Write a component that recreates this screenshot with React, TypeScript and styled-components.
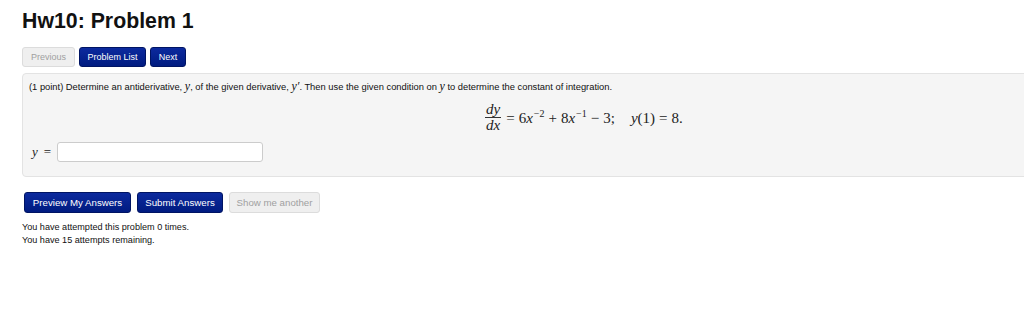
import React from "react";
import styled, { createGlobalStyle } from "styled-components";

const GlobalStyle = createGlobalStyle`
  html, body {
    margin: 0;
    padding: 0;
    background: #fff;
    overflow: hidden;
  }
  body {
    font-family: "Liberation Sans", Arial, sans-serif;
    color: #222;
  }
`;

const Page = styled.div`
  padding: 9px 0 0 22px;
`;

const Title = styled.h1`
  margin: 0;
  font-size: 21.3px;
  line-height: 24px;
  font-weight: bold;
  color: #111;
`;

const ButtonRow = styled.div<{ $top: number; $gap: number; $indent?: number }>`
  display: flex;
  gap: ${(p) => p.$gap}px;
  margin-top: ${(p) => p.$top}px;
  padding-left: ${(p) => p.$indent ?? 0}px;
`;

const Button = styled.button<{ $primary?: boolean; $w: number; $h: number; $fs: number }>`
  width: ${(p) => p.$w}px;
  height: ${(p) => p.$h}px;
  padding: 0;
  font-family: "Liberation Sans", Arial, sans-serif;
  font-size: ${(p) => p.$fs}px;
  border-radius: 3px;
  cursor: pointer;
  color: ${(p) => (p.$primary ? "#fff" : "#a0a0a0")};
  background: ${(p) =>
    p.$primary ? "linear-gradient(#0c2a9e, #001b80)" : "#efefef"};
  border: 1px solid ${(p) => (p.$primary ? "#001463" : "#dcdcdc")};
`;

const Well = styled.div`
  margin-top: 6px;
  margin-right: -10px;
  height: 104px;
  box-sizing: border-box;
  padding: 6px 0 0 6px;
  background: #f5f5f5;
  border: 1px solid #e3e3e3;
  border-radius: 4px;
`;

const ProblemText = styled.div`
  font-size: 9.35px;
  line-height: 13px;
  color: #111;
  white-space: nowrap;
`;

const MathVar = styled.span<{ $size?: number }>`
  font-family: "Liberation Serif", "Times New Roman", serif;
  font-style: italic;
  font-size: ${(p) => p.$size ?? 12}px;
`;

const Equation = styled.div`
  margin-top: 10px;
  height: 28px;
  line-height: 28px;
  padding-left: 456px;
  font-family: "Liberation Serif", "Times New Roman", serif;
  font-size: 15px;
  color: #222;
  white-space: nowrap;
`;

const Frac = styled.span`
  display: inline-flex;
  flex-direction: column;
  align-items: center;
  vertical-align: 9px;
  font-style: italic;
  line-height: 11px;
  margin-right: 1px;
`;

const Num = styled.span`
  padding: 0 1px 2px;
  border-bottom: 1px solid #333;
`;

const Den = styled.span`
  padding: 2px 1px 0;
`;

const Op = styled.span`
  margin: 0 4px;
`;

const Sup = styled.sup`
  font-size: 10px;
  line-height: 0;
  vertical-align: 6px;
  margin-left: 1px;
`;

const Quad = styled.span`
  display: inline-block;
  width: 16px;
`;

const AnswerRow = styled.div`
  display: flex;
  align-items: center;
  gap: 6px;
  margin-top: 10px;
  padding-left: 3px;
  font-family: "Liberation Serif", "Times New Roman", serif;
  font-size: 13px;
`;

const AnswerInput = styled.input`
  width: 206px;
  height: 20px;
  box-sizing: border-box;
  border: 1px solid #cccccc;
  border-radius: 3px;
  background: #fff;
  outline: none;
`;

const Messages = styled.div`
  margin-top: 8px;
  font-size: 9.1px;
  line-height: 13px;
  color: #111;
`;

export default function App() {
  return (
    <Page>
      <GlobalStyle />
      <Title>Hw10: Problem 1</Title>
      <ButtonRow $top={14} $gap={4}>
        <Button $w={53} $h={20} $fs={9}>Previous</Button>
        <Button $primary $w={67} $h={20} $fs={9}>Problem List</Button>
        <Button $primary $w={36} $h={20} $fs={9}>Next</Button>
      </ButtonRow>
      <Well>
        <ProblemText>
          (1 point) Determine an antiderivative, <MathVar>y</MathVar>, of the given
          derivative, <MathVar>y′</MathVar>. Then use the given condition on{" "}
          <MathVar>y</MathVar> to determine the constant of integration.
        </ProblemText>
        <Equation>
          <Frac>
            <Num>dy</Num>
            <Den>dx</Den>
          </Frac>
          <Op>=</Op>6<MathVar $size={15}>x</MathVar>
          <Sup>−2</Sup>
          <Op>+</Op>8<MathVar $size={15}>x</MathVar>
          <Sup>−1</Sup>
          <Op>−</Op>3;
          <Quad />
          <MathVar $size={15}>y</MathVar>(1)<Op>=</Op>8.
        </Equation>
        <AnswerRow>
          <MathVar $size={13}>y</MathVar>
          <span>=</span>
          <AnswerInput type="text" />
        </AnswerRow>
      </Well>
      <ButtonRow $top={15} $gap={6} $indent={2}>
        <Button $primary $w={107} $h={21} $fs={9.7}>Preview My Answers</Button>
        <Button $primary $w={86} $h={21} $fs={9.7}>Submit Answers</Button>
        <Button $w={91} $h={21} $fs={9.7}>Show me another</Button>
      </ButtonRow>
      <Messages>
        <div>You have attempted this problem 0 times.</div>
        <div>You have 15 attempts remaining.</div>
      </Messages>
    </Page>
  );
}
